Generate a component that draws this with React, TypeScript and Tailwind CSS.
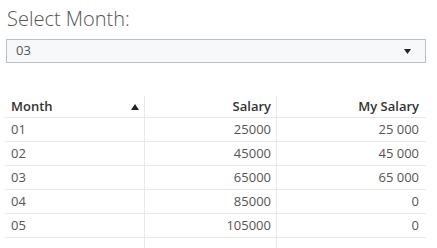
import React from "react";

const rows = [
  ["01", "25000", "25 000"],
  ["02", "45000", "45 000"],
  ["03", "65000", "65 000"],
  ["04", "85000", "0"],
  ["05", "105000", "0"],
];

export default function App() {
  return (
    <div className="w-[437px] h-[248px] overflow-hidden bg-white" style={{ fontFamily: '"Open Sans", "Noto Sans", sans-serif' }}>
      <div className="pl-[7px] pt-[5px] text-[20px] leading-[27px] font-light text-[#555]">Select Month:</div>
      <div className="ml-[6px] mt-[7px] w-[420px] h-[24px] border border-[#b9c0cb] bg-[#f7f8fa] flex items-center justify-between pl-[9px] pr-[14px]">
        <span className="text-[13px] text-[#555]">03</span>
        <svg width="7" height="5" viewBox="0 0 7 5"><path d="M0 0h7L3.5 5z" fill="#222" /></svg>
      </div>
      <div className="ml-[5px] mt-[33px] w-[421px] grid grid-cols-[140px_132px_149px] text-[13px] text-[#555]">
        <div className="h-[22px] border-b border-r border-[#e8e8e8] flex items-center justify-between pl-[6px] pr-[5px] font-semibold text-[#333]">
          <span>Month</span>
          <svg width="8" height="6" viewBox="0 0 8 6"><path d="M0 6h8L4 0z" fill="#222" /></svg>
        </div>
        <div className="h-[22px] border-b border-r border-[#e8e8e8] flex items-center justify-end pr-[5px] font-semibold text-[#333]">Salary</div>
        <div className="h-[22px] border-b border-[#e8e8e8] flex items-center justify-end pr-[7px] font-semibold text-[#333]">My Salary</div>
        {rows.map((r) => (
          <React.Fragment key={r[0]}>
            <div className="h-[24px] border-b border-r border-[#e8e8e8] flex items-center pl-[6px]">{r[0]}</div>
            <div className="h-[24px] border-b border-r border-[#e8e8e8] flex items-center justify-end pr-[5px]">{r[1]}</div>
            <div className="h-[24px] border-b border-[#e8e8e8] flex items-center justify-end pr-[7px]">{r[2]}</div>
          </React.Fragment>
        ))}
        <div className="h-[24px] border-r border-[#e8e8e8]"></div>
        <div className="h-[24px] border-r border-[#e8e8e8]"></div>
        <div className="h-[24px]"></div>
      </div>
    </div>
  );
}
